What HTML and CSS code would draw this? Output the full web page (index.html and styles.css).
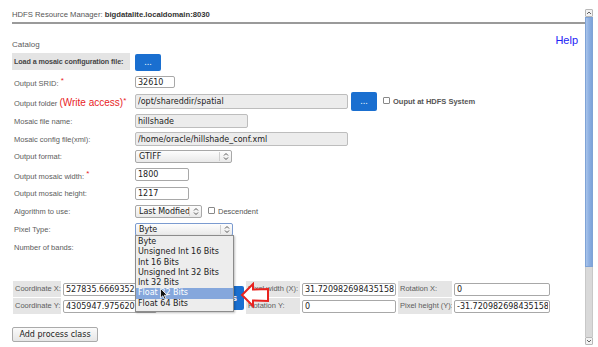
FILE: index.html
```html
<!DOCTYPE html>
<html lang="en">
<head>
    <meta charset="UTF-8">
    <title>Mosaic configuration</title>
<link rel="stylesheet" href="styles.css">
</head>
<body>
<div class="window">
    <div class="main">
        <div class="header">HDFS Resource Manager: <b>bigdatalite.localdomain:8030</b></div>

        <div class="catalog-head">
            <div class="catalog">Catalog</div>
            <a class="help" href="#">Help</a>
        </div>

        <div class="load-row">
            <div class="load-label">Load a mosaic configuration file:</div>
            <button class="btn-blue">...</button>
        </div>

        <div class="row">
            <label class="label">Output SRID: <span class="req">*</span></label>
            <input class="field w40 short" value="32610">
        </div>
        <div class="row folder">
            <label class="label">Output folder <span class="write">(Write access)</span><span class="req">*</span></label>
            <input class="field ro w213 tall" value="/opt/shareddir/spatial" readonly>
            <button class="btn-blue btn-folder">...</button>
            <span class="check"></span>
            <span class="check-text bold">Ouput at HDFS System</span>
        </div>
        <div class="row">
            <label class="label">Mosaic file name:</label>
            <input class="field ro w113" value="hillshade" readonly>
        </div>
        <div class="row">
            <label class="label">Mosaic config file(xml):</label>
            <input class="field ro w213" value="/home/oracle/hillshade_conf.xml" readonly>
        </div>
        <div class="row r17">
            <label class="label">Output format:</label>
            <div class="select w97"><span>GTIFF</span><i class="arrows"><svg width="6" height="9" viewBox="0 0 6 9"><path d="M1 3.5 L3 1.5 L5 3.5 M1 5.5 L3 7.5 L5 5.5" fill="none" stroke="#555" stroke-width="1"/></svg></i></div>
        </div>
        <div class="row r19">
            <label class="label">Output mosaic width: <span class="req">*</span></label>
            <input class="field w54 mid" value="1800">
        </div>
        <div class="row">
            <label class="label">Output mosaic height:</label>
            <input class="field w54 mid" value="1217">
        </div>
        <div class="row">
            <label class="label">Algorithm to use:</label>
            <div class="select w67"><span>Last Modfied</span><i class="arrows"><svg width="6" height="9" viewBox="0 0 6 9"><path d="M1 3.5 L3 1.5 L5 3.5 M1 5.5 L3 7.5 L5 5.5" fill="none" stroke="#555" stroke-width="1"/></svg></i></div>
            <span class="check"></span>
            <span class="check-text">Descendent</span>
        </div>
        <div class="row">
            <label class="label">Pixel Type:</label>
            <div class="select w98 focus"><span>Byte</span><i class="arrows"><svg width="6" height="9" viewBox="0 0 6 9"><path d="M1 3.5 L3 1.5 L5 3.5 M1 5.5 L3 7.5 L5 5.5" fill="none" stroke="#555" stroke-width="1"/></svg></i></div>
        </div>
        <div class="row">
            <label class="label">Number of bands:</label>
        </div>

        <div class="coords">
            <div class="cell-label">Coordinate X:</div>
            <div class="cell"><input class="field cfield" value="527835.6669352153"></div>
            <div class="cell btn-cell"><button class="btn-blue btn-read">Get Params</button></div>
            <div class="cell-label">Pixel width (X):</div>
            <div class="cell"><input class="field cfield" value="31.720982698435158"></div>
            <div class="cell-label">Rotation X:</div>
            <div class="cell"><input class="field cfield" value="0"></div>

            <div class="cell-label">Coordinate Y:</div>
            <div class="cell"><input class="field cfield" value="4305947.975620795"></div>
            <div class="cell-label">Rotation Y:</div>
            <div class="cell"><input class="field cfield" value="0"></div>
            <div class="cell-label">Pixel height (Y):</div>
            <div class="cell"><input class="field cfield neg" value="-31.720982698435158"></div>
        </div>

        <button class="btn-gray">Add process class</button>

        <ul class="dropdown">
            <li>Byte</li>
            <li>Unsigned Int 16 Bits</li>
            <li>Int 16 Bits</li>
            <li>Unsigned Int 32 Bits</li>
            <li>Int 32 Bits</li>
            <li class="hover">Float 32 Bits</li>
            <li>Float 64 Bits</li>
        </ul>

        <svg class="red-arrow" width="30" height="27" viewBox="0 0 30 27">
            <path d="M2 13 L13 2 L13 7.5 L28 7 L28 19 L13 18.5 L13 24 Z" fill="#fff" stroke="#e8231f" stroke-width="2" stroke-linejoin="miter"/>
        </svg>
        <svg class="cursor" width="8" height="12" viewBox="0 0 8 12">
            <path d="M0.5 0.5 L0.5 10 L2.8 7.8 L4.6 11.3 L6 10.6 L4.3 7.2 L7.2 7.2 Z" fill="#111" stroke="#fff" stroke-width="0.8"/>
        </svg>
    </div>

    <div class="scrollbar">
        <div class="sb-btn"><svg width="6" height="4" viewBox="0 0 6 4"><path d="M1 3 L3 1 L5 3" fill="none" stroke="#666" stroke-width="1"/></svg></div>
        <div class="sb-thumb"></div>
        <div class="sb-track"></div>
        <div class="sb-btn"><svg width="6" height="4" viewBox="0 0 6 4"><path d="M1 1 L3 3 L5 1" fill="none" stroke="#666" stroke-width="1"/></svg></div>
    </div>
</div>
</body>
</html>
```

FILE: styles.css
```css
* {
    box-sizing: border-box;
}

body {
    margin: 0;
    background-color: #fff;
    font-family: "Liberation Sans", Arial, sans-serif;
    color: #5c5c5c;
}

.window {
    display: flex;
    width: 598px;
    height: 347px;
    overflow: hidden;
}

.main {
    position: relative;
    width: 585px;
    padding-left: 12px;
}

.header {
    height: 24px;
    padding-top: 10px;
    font-size: 7.7px;
    line-height: 10px;
    color: #555;
    border-bottom: 2px solid #9a9a9a;
}

.header b {
    color: #333;
}

.catalog-head {
    display: flex;
    justify-content: space-between;
    height: 29px;
}

.catalog {
    padding-top: 16px;
    font-size: 8px;
    line-height: 10px;
}

.help {
    padding-top: 9px;
    padding-right: 7px;
    font-size: 11px;
    line-height: 14px;
    color: #2222f5;
    text-decoration: none;
}

.load-row {
    display: flex;
    height: 18px;
    margin-bottom: 2px;
}

.load-label {
    width: 118px;
    height: 17px;
    padding-left: 2px;
    background-color: #e4e4e4;
    font-size: 7.2px;
    font-weight: bold;
    line-height: 17px;
    color: #444;
    white-space: nowrap;
    letter-spacing: -0.1px;
}

.btn-blue {
    margin: 1px 0 0 5px;
    width: 26px;
    height: 17px;
    padding: 0;
    border: 0;
    border-radius: 2px;
    background-color: #1a6fd0;
    color: #fff;
    font-family: "DejaVu Sans", sans-serif;
    font-size: 8px;
    line-height: 12px;
}

.row {
    display: flex;
    align-items: center;
    height: 18px;
}

.row.folder { height: 21px; }
.row.r17 { height: 17px; }
.row.r19 { height: 19px; }

.label {
    width: 123px;
    padding-left: 2px;
    font-size: 7.5px;
    white-space: nowrap;
}

.req {
    color: #e8231f;
    font-size: 8px;
    vertical-align: 3px;
}

.write {
    color: #e8231f;
    font-size: 10px;
}

.field {
    height: 14px;
    padding: 0 2px;
    border: 1px solid #a8a8a8;
    border-radius: 2px;
    background-color: #fff;
    font-family: "DejaVu Sans", sans-serif;
    font-size: 8px;
    color: #222;
    outline: none;
}

.field.ro { background-color: #ececec; border-color: #bdbdbd; }
.field.short { height: 12px; }
.field.tall { height: 15px; }
.field.mid { height: 13px; }

.w40 { width: 40px; }
.w54 { width: 54px; }
.w113 { width: 113px; }
.w213 { width: 213px; }
.w67 { width: 67px; }
.w97 { width: 97px; }
.w98 { width: 98px; }

.btn-folder {
    width: 26px;
    height: 19px;
    margin: 0 0 0 3px;
}

.check {
    width: 7px;
    height: 7px;
    margin: 0 3px 0 6px;
    border: 1px solid #888;
    border-radius: 1px;
    background-color: #fff;
    align-self: center;
    position: relative;
    top: -1px;
}

.check-text {
    font-size: 7.5px;
    color: #555;
}

.bold {
    font-weight: bold;
}

.select {
    display: flex;
    align-items: center;
    height: 13px;
    border: 1px solid #a8a8a8;
    border-radius: 2px;
    background: linear-gradient(#fdfdfd, #e9e9e9);
    font-family: "DejaVu Sans", sans-serif;
    font-size: 8px;
    color: #222;
}

.select span {
    flex: 1;
    padding-left: 3px;
    white-space: nowrap;
    overflow: hidden;
}

.select .arrows {
    display: flex;
    align-items: center;
    justify-content: center;
    width: 12px;
    height: 9px;
    border-left: 1px solid #cfcfcf;
}

.select.focus {
    border-color: #7b9bd0;
}

.coords {
    display: grid;
    grid-template-columns: 48px 94px 85px 54px 94px 54px 96px;
    grid-template-rows: 16px 16px;
    column-gap: 2px;
    row-gap: 1px;
    margin: 25px 0 0 1px;
}

.cell-label {
    padding-left: 2px;
    background-color: #e5e5e5;
    font-size: 7.5px;
    line-height: 16px;
    white-space: nowrap;
    overflow: hidden;
}

.cell {
    display: flex;
    align-items: center;
}

.cfield {
    width: 100%;
    height: 13px;
    padding: 0 1px 0 2px;
}

.btn-cell {
    grid-row: span 2;
    justify-content: flex-end;
    background-color: #fff;
}

.btn-read {
    width: 76px;
    height: 24px;
    margin: 0;
    padding: 0 7px 0 0;
    text-align: right;
    font-size: 8.5px;
    font-weight: bold;
}

.btn-gray {
    display: block;
    width: 86px;
    height: 15px;
    margin: 13px 0 0 0;
    padding: 0;
    border: 1px solid #aaa;
    border-radius: 2px;
    background: linear-gradient(#fafafa, #e6e6e6);
    font-family: "DejaVu Sans", sans-serif;
    font-size: 8px;
    line-height: 12px;
    color: #222;
}

.dropdown {
    position: absolute;
    left: 135px;
    top: 235px;
    width: 99px;
    margin: 0;
    padding: 1px 0 2px 0;
    list-style: none;
    border: 1px solid #8c8c8c;
    background-color: #ededed;
    box-shadow: 1px 1px 2px rgba(0,0,0,0.25);
    font-family: "DejaVu Sans", sans-serif;
    font-size: 8px;
    line-height: 10.3px;
    color: #222;
    z-index: 2;
}

.dropdown li {
    padding-left: 2px;
    white-space: nowrap;
}

.dropdown li.hover {
    background-color: #85a7dc;
    color: #fff;
}

.red-arrow {
    position: absolute;
    left: 240px;
    top: 282px;
    z-index: 3;
}

.cursor {
    position: absolute;
    left: 160px;
    top: 288px;
    z-index: 4;
}

.scrollbar {
    display: flex;
    flex-direction: column;
    width: 8px;
    height: 336px;
    margin-top: 9px;
}

.sb-btn {
    display: flex;
    align-items: center;
    justify-content: center;
    height: 8px;
    border: 1px solid #b8b8b8;
    border-radius: 1px;
    background-color: #f2f2f2;
}

.sb-thumb {
    height: 250px;
    border: 1px solid #7fa3d6;
    background: linear-gradient(90deg, #a9c4eb, #8db0e2 50%, #7ea4da);
}

.sb-track {
    flex: 1;
    background-color: #d9d9d9;
    border-left: 1px solid #c8c8c8;
    border-right: 1px solid #c8c8c8;
}
```
